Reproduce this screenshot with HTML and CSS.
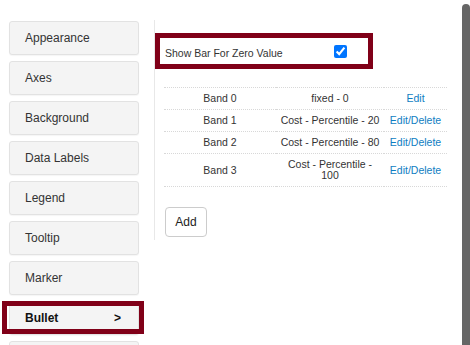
FILE: index.html
```html
<!DOCTYPE html>
<html>
<head>
<meta charset="utf-8">
<link rel="stylesheet" href="styles.css">
</head>
<body>
<div class="page">
  <nav class="sidebar">
    <div class="tab">Appearance</div>
    <div class="tab">Axes</div>
    <div class="tab">Background</div>
    <div class="tab">Data Labels</div>
    <div class="tab">Legend</div>
    <div class="tab">Tooltip</div>
    <div class="tab">Marker</div>
    <div class="tab active"><span>Bullet</span><span class="arrow">&gt;</span></div>
    <div class="tab"></div>
  </nav>
  <main class="panel">
    <div class="zero-row">
      <span class="label">Show Bar For Zero Value</span>
      <input type="checkbox" class="check" checked>
    </div>
    <table class="bands">
      <colgroup><col class="c1"><col class="c2"><col class="c3"></colgroup>
      <tbody>
        <tr><td>Band 0</td><td>fixed - 0</td><td><a class="link">Edit</a></td></tr>
        <tr><td>Band 1</td><td>Cost - Percentile - 20</td><td><a class="link">Edit/Delete</a></td></tr>
        <tr><td>Band 2</td><td>Cost - Percentile - 80</td><td><a class="link">Edit/Delete</a></td></tr>
        <tr><td>Band 3</td><td>Cost - Percentile - 100</td><td><a class="link">Edit/Delete</a></td></tr>
      </tbody>
    </table>
    <button class="add">Add</button>
  </main>
  <div class="scrollbar"></div>
</div>
</body>
</html>
```
FILE: styles.css
```css
html, body {
  margin: 0;
  padding: 0;
  background: #fff;
}
body {
  font-family: "Liberation Sans", Arial, sans-serif;
  color: #333;
  overflow: hidden;
}
.page {
  position: relative;
  height: 345px;
  display: flex;
  align-items: flex-start;
  overflow: hidden;
}
.sidebar {
  padding: 21px 0 0 9px;
  width: 130px;
  display: flex;
  flex-direction: column;
  gap: 6px;
  flex-shrink: 0;
}
.tab {
  position: relative;
  box-sizing: border-box;
  height: 34px;
  border: 1px solid #e2e2e2;
  border-radius: 3px;
  background: #f4f4f4;
  padding: 0 17px 0 15px;
  display: flex;
  align-items: center;
  justify-content: space-between;
  font-size: 12px;
  color: #333;
  box-shadow: 0 1px 1px rgba(0,0,0,0.04);
}
.tab.active {
  font-weight: bold;
  color: #111;
}
.tab.active::after {
  content: "";
  position: absolute;
  left: -8px;
  top: -1px;
  width: 142px;
  height: 33px;
  box-sizing: border-box;
  border: 5px solid #800018;
}
.panel {
  margin: 20px 0 0 15px;
  height: 220px;
  width: 300px;
  border-left: 1px solid #e8e8e8;
}
.zero-row {
  margin-top: 13px;
  box-sizing: border-box;
  width: 218px;
  height: 36px;
  border: 5px solid #800018;
  display: flex;
  align-items: center;
  padding-left: 5px;
  font-size: 10.5px;
  color: #333;
}
.label {
  width: 169px;
  padding-top: 3px;
}
.check {
  margin: 0;
  width: 13px;
  height: 13px;
}
.bands {
  margin: 18px 0 0 9px;
  width: 283px;
  table-layout: fixed;
  border-collapse: collapse;
  border-top: 1px dotted #d8d8d8;
  font-size: 10.5px;
  color: #333;
}
.c1 { width: 112px; }
.c2 { width: 108px; }
.c3 { width: 63px; }
.bands td {
  border-bottom: 1px dotted #d8d8d8;
  padding: 5px 3px;
  line-height: 11px;
  text-align: center;
  vertical-align: middle;
}
.link {
  color: #0f7dc2;
  cursor: pointer;
}
.add {
  display: block;
  margin: 20px 0 0 10px;
  box-sizing: border-box;
  width: 42px;
  height: 30px;
  border: 1px solid #cccccc;
  border-radius: 4px;
  background: #fff;
  font-family: "Liberation Sans", Arial, sans-serif;
  font-size: 12px;
  color: #222;
  padding: 0;
}
.scrollbar {
  position: absolute;
  right: 0;
  top: 4px;
  bottom: 0;
  width: 8px;
  background: #666;
  border-radius: 4px 4px 0 0;
}
```
